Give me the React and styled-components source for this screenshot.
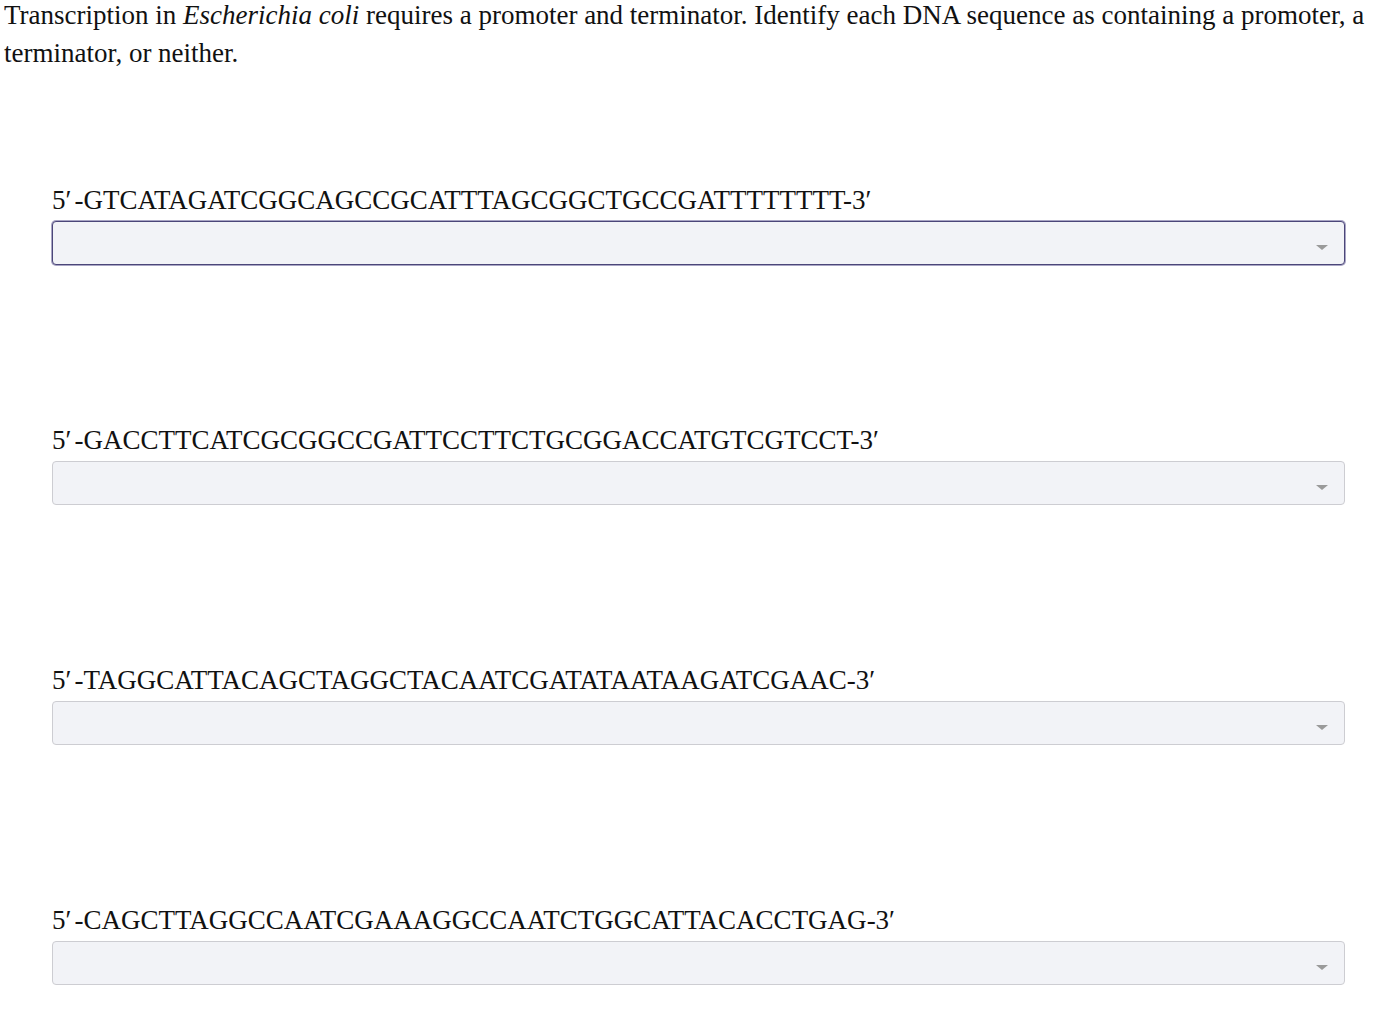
import React from "react";
import styled, { createGlobalStyle } from "styled-components";

const Global = createGlobalStyle`
  html, body { margin: 0; padding: 0; background: #fff; }
  body { font-family: "Liberation Serif", "Times New Roman", serif; color: #111; }
`;

const Page = styled.div`
  padding: 0 4px;
`;

const Intro = styled.p`
  margin: -4px 0 0;
  font-size: 27px;
  line-height: 38px;
  padding-right: 20px;
`;

const List = styled.div`
  display: flex;
  flex-direction: column;
  gap: 160px;
  padding: 113px 45px 40px 48px;
`;

const Item = styled.div`
  display: flex;
  flex-direction: column;
  gap: 6px;
`;

const Label = styled.div`
  font-size: 27px;
  line-height: 30px;
  white-space: nowrap;
`;

const Prime = styled.span`
  margin-right: 3px;
`;

const SelectBox = styled.div`
  box-sizing: border-box;
  height: 44px;
  border-radius: 4px;
  background: #f2f3f7;
  border: 1px solid ${(p) => (p.$focused ? "#4b4679" : "#cdcdd2")};
  box-shadow: ${(p) => (p.$focused ? "0 0 0 1px #a9a5c4" : "none")};
  display: flex;
  align-items: center;
  justify-content: flex-end;
  padding: 8px 16px 0 0;
`;

const Caret = styled.span`
  width: 0;
  height: 0;
  border-left: 6px solid transparent;
  border-right: 6px solid transparent;
  border-top: 5px solid #9a9a9a;
`;

const sequences = [
  "GTCATAGATCGGCAGCCGCATTTAGCGGCTGCCGATTTTTTTT",
  "GACCTTCATCGCGGCCGATTCCTTCTGCGGACCATGTCGTCCT",
  "TAGGCATTACAGCTAGGCTACAATCGATATAATAAGATCGAAC",
  "CAGCTTAGGCCAATCGAAAGGCCAATCTGGCATTACACCTGAG",
];

export default function App() {
  return (
    <Page>
      <Global />
      <Intro>
        Transcription in <i>Escherichia coli</i> requires a promoter and terminator. Identify each DNA sequence as containing a promoter, a terminator, or neither.
      </Intro>
      <List>
        {sequences.map((s, i) => (
          <Item key={s}>
            <Label>
              5<Prime>′</Prime>-{s}-3′
            </Label>
            <SelectBox $focused={i === 0}>
              <Caret />
            </SelectBox>
          </Item>
        ))}
      </List>
    </Page>
  );
}
